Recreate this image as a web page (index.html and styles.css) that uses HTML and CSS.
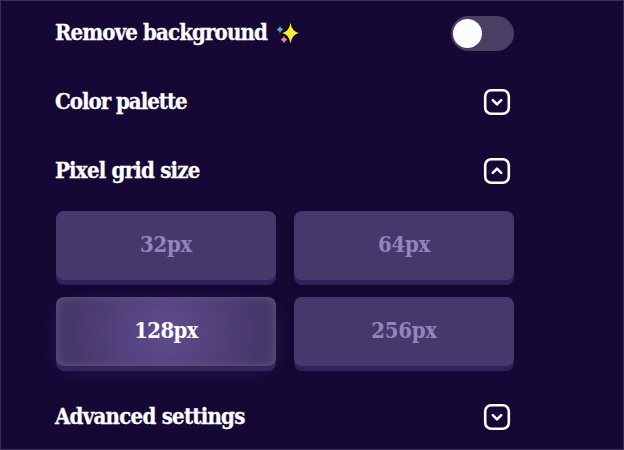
FILE: index.html
```
<!DOCTYPE html>
<html lang="en">
<head>
  <meta charset="UTF-8">
  <title>Settings</title>
  <link rel="stylesheet" href="styles.css">
</head>
<body>
  <div class="panel">
    <div class="row">
      <span class="label label-remove">Remove background</span>
      <svg class="sparkles" viewBox="0 0 24 24">
        <path class="spark-halo" d="M14.5 1.5Q15.7 10.5 23 12Q15.7 13.5 14.5 22.5Q13.3 13.5 6 12Q13.3 10.5 14.5 1.5Z"/>
        <path class="spark-yellow" d="M14.5 1.5Q15.7 10.5 23 12Q15.7 13.5 14.5 22.5Q13.3 13.5 6 12Q13.3 10.5 14.5 1.5Z"/>
        <path class="spark-blue" d="M4 5Q4.8 7.8 7.4 8.5Q4.8 9.2 4 12.2Q3.2 9.2 .6 8.5Q3.2 7.8 4 5Z"/>
        <path class="spark-pink" d="M8 15Q8.8 18 11.4 18.7Q8.8 19.4 8 22.3Q7.2 19.4 4.6 18.7Q7.2 18 8 15Z"/>
      </svg>
      <button class="toggle" type="button" role="switch" aria-checked="false"><span class="knob"></span></button>
    </div>

    <div class="row">
      <span class="label label-color">Color palette</span>
      <svg class="chevron" viewBox="0 0 28 28"><rect x="2.2" y="2.2" width="23.6" height="23.6" rx="6"/><path d="M9.8 12.2L14 16.4L18.2 12.2"/></svg>
    </div>

    <div class="row">
      <span class="label label-grid">Pixel grid size</span>
      <svg class="chevron up" viewBox="0 0 28 28"><rect x="2.2" y="2.2" width="23.6" height="23.6" rx="6"/><path d="M9.8 12.2L14 16.4L18.2 12.2"/></svg>
    </div>

    <div class="sizes">
      <button class="size" type="button">32px</button>
      <button class="size" type="button">64px</button>
      <button class="size active" type="button">128px</button>
      <button class="size" type="button">256px</button>
    </div>

    <div class="row">
      <span class="label label-advanced">Advanced settings</span>
      <svg class="chevron" viewBox="0 0 28 28"><rect x="2.2" y="2.2" width="23.6" height="23.6" rx="6"/><path d="M9.8 12.2L14 16.4L18.2 12.2"/></svg>
    </div>
  </div>
</body>
</html>
```
FILE: styles.css
```
* {
  box-sizing: border-box;
}

body {
  margin: 0;
  background-color: #150835;
  font-family: 'DejaVu Serif Condensed', 'DejaVu Serif', serif;
  font-stretch: condensed;
}

.panel {
  height: 450px;
  padding: 15px 109px 0 54px;
  border: 1px solid #3a2f58;
  overflow: hidden;
}

.row {
  display: flex;
  align-items: center;
  height: 34px;
  margin-bottom: 35px;
}

.label {
  padding-bottom: 3px;
  color: #fff;
  font-size: 22px;
  font-weight: bold;
  line-height: 34px;
  white-space: nowrap;
  -webkit-text-stroke: 0.3px #fff;
}

.label-remove {
  letter-spacing: -0.87px;
}

.label-color {
  letter-spacing: -1px;
}

.label-grid {
  letter-spacing: -0.77px;
}

.label-advanced {
  letter-spacing: -0.74px;
}

.sparkles {
  width: 24px;
  height: 24px;
  margin-left: 9px;
}

.spark-halo {
  fill: #08051a;
  stroke: #08051a;
  stroke-width: 2;
}

.spark-yellow {
  fill: #fff22d;
}

.spark-blue {
  fill: #55aed0;
}

.spark-pink {
  fill: #e58b9b;
}

.toggle {
  width: 63px;
  height: 35px;
  margin-left: auto;
  padding: 3px 2px;
  border: none;
  border-radius: 18px;
  background-color: #4a3e63;
}

.knob {
  display: block;
  width: 29px;
  height: 29px;
  border-radius: 50%;
  background-color: #fcfbfd;
}

.chevron {
  width: 28px;
  height: 28px;
  margin-left: auto;
  margin-right: 3px;
  fill: none;
  stroke: #fff;
  stroke-width: 2.6;
  stroke-linecap: round;
  stroke-linejoin: round;
}

.chevron.up path {
  transform: rotate(180deg);
  transform-origin: 14px 14px;
}

.sizes {
  display: grid;
  grid-template-columns: 1fr 1fr;
  gap: 17px 18px;
  margin: -12px 0 34px 1px;
}

.size {
  height: 69px;
  padding: 0 0 4px;
  border: none;
  border-radius: 8px;
  background-color: #47386c;
  box-shadow: 0 5px 0 #30205b;
  color: #9385bd;
  font-family: inherit;
  font-stretch: condensed;
  font-size: 22px;
  font-weight: bold;
  letter-spacing: -0.3px;
}

.size.active {
  background-image: radial-gradient(circle 92px at center, #5f4c8e, #47386c);
  box-shadow: inset 0 0 8px #65577f, 0 5px 0 #35255f, 0 6px 24px -8px rgba(91, 65, 146, 0.5);
  color: #fff;
  letter-spacing: -0.7px;
}
```
